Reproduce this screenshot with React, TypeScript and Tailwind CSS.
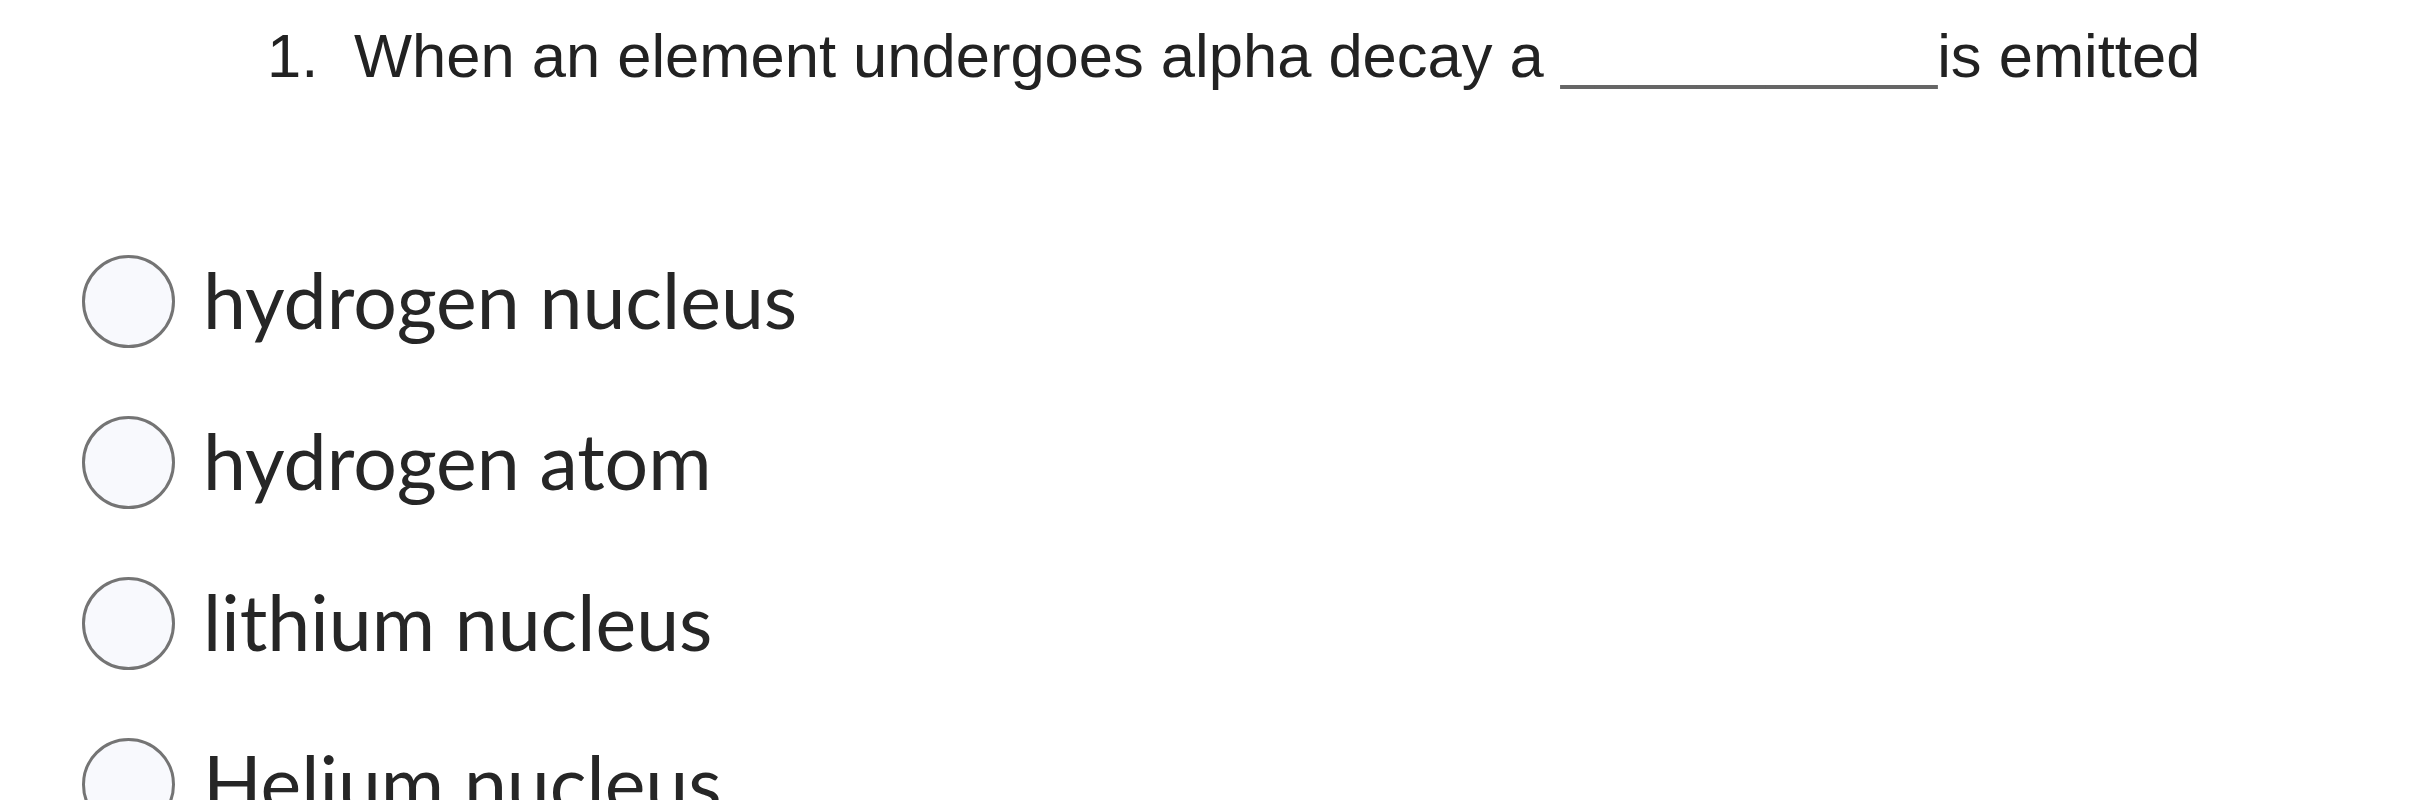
const options = ["hydrogen nucleus", "hydrogen atom", "lithium nucleus", "Helium nucleus"];

export default function App() {
  return (
    <div className="h-[800px] w-full overflow-hidden bg-white">
      <div
        className="flex pl-[267px] pt-[20px] text-[61.5px] leading-[72px] text-[#222222]"
        style={{ fontFamily: '"Liberation Sans", Arial, sans-serif' }}
      >
        <span className="w-[87px] shrink-0">1.</span>
        <span className="whitespace-nowrap">
          When an element undergoes alpha decay a <span className="text-[#666666]">___________</span>is emitted
        </span>
      </div>

      <div className="mt-[129px] flex flex-col pl-[82px]" style={{ fontFamily: "Lato, sans-serif" }}>
        {options.map((opt) => (
          <label key={opt} className="flex h-[161px] items-center gap-[28px]">
            <span className="h-[93px] w-[93px] shrink-0 rounded-full border-[3px] border-[#747474] bg-[#f8f9fd]" />
            <span className="mb-[4px] whitespace-nowrap text-[77px] leading-[1.2] text-[#262626]">{opt}</span>
          </label>
        ))}
      </div>
    </div>
  );
}
